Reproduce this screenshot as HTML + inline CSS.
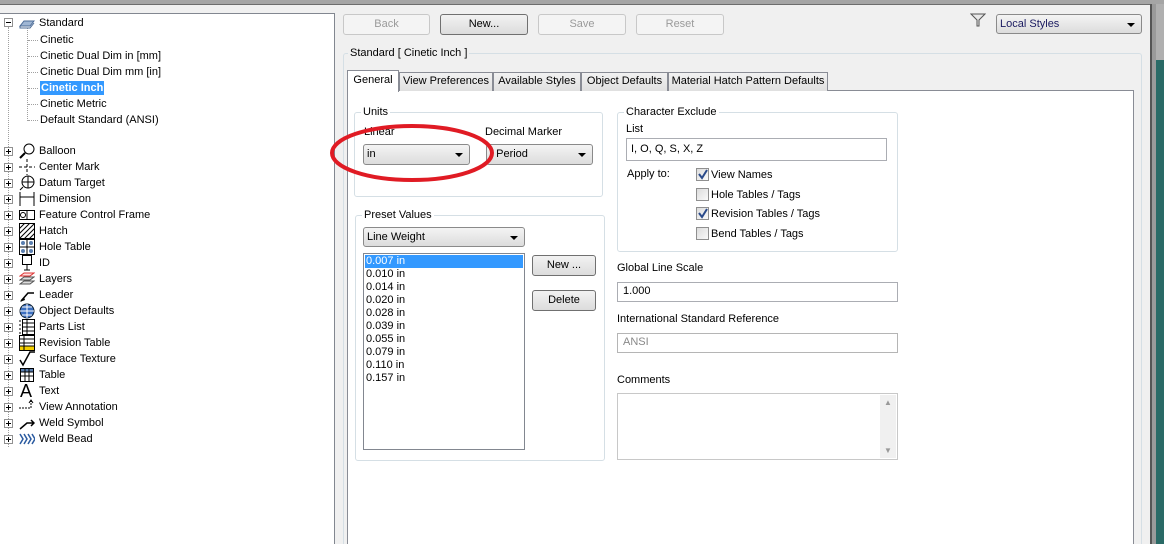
<!DOCTYPE html>
<html style="overflow:hidden"><head><meta charset="utf-8"><style>
*{box-sizing:border-box}
body{margin:0;width:1164px;height:544px;overflow:hidden;background:#f0f0f0;font-family:"Liberation Sans",sans-serif;font-size:11px;color:#000;position:relative}
.a{position:absolute}
.t{position:absolute;white-space:nowrap;line-height:14px}
.btn{position:absolute;border:1px solid #acacac;border-radius:3px;background:linear-gradient(#f2f2f2,#dcdcdc);text-align:center;line-height:18px;color:#000;white-space:nowrap}
.dis{color:#9a9a9a;background:#f4f4f4;border-color:#c8c8c8}
.combo{position:absolute;border:1px solid #8a8a8a;border-radius:3px;background:linear-gradient(#f4f4f4,#dcdcdc);line-height:18px;padding-left:3px;white-space:nowrap}
.combo:after{content:"";position:absolute;right:6px;top:8px;border-left:4px solid transparent;border-right:4px solid transparent;border-top:4px solid #000}
.grp{position:absolute;border:1px solid #d5dfe5;border-radius:3px}
.gl{position:absolute;top:-8px;left:6px;background:#fff;padding:0 2px;line-height:14px;white-space:nowrap}
.inp{position:absolute;border:1px solid #abadb3;background:#fff;line-height:17px;padding-left:5px;white-space:nowrap}
.cb{position:absolute;width:13px;height:13px;border:1px solid #8f8f8f;background:linear-gradient(135deg,#dcdcdc,#fafafa)}
.tab{position:absolute;top:72px;height:19px;border:1px solid #898c95;border-bottom:none;background:linear-gradient(#f2f2f2,#e0e0e0);line-height:17px;text-align:center;white-space:nowrap;overflow:hidden}
.pm{position:absolute;left:4px;width:9px;height:9px;border:1px solid #919191;background:#fff}
.pm:before{content:"";position:absolute;left:1px;top:3px;width:5px;height:1px;background:#000}
.pm.p:after{content:"";position:absolute;left:3px;top:1px;width:1px;height:5px;background:#000}
.ic{position:absolute;left:19px;width:16px;height:16px}
</style></head><body>
<div class="a" style="left:0;top:0;width:1164px;height:4px;background:#a5a5a5"></div>
<div class="a" style="left:0;top:4px;width:1150px;height:1px;background:#6d6d6d"></div>
<div class="a" style="left:1150px;top:4px;width:2px;height:540px;background:#555"></div>
<div class="a" style="left:1152px;top:4px;width:4px;height:540px;background:#9a9a9a"></div>
<div class="a" style="left:1156px;top:60px;width:8px;height:484px;background:#2a6a66"></div>
<div class="a" style="left:1156px;top:4px;width:8px;height:56px;background:#b0b0b0"></div>

<!-- tree -->
<div class="a" style="left:0;top:13px;width:335px;height:531px;background:#fff;border-top:1px solid #828790;border-right:1px solid #828790"></div>
<div class="a" style="left:8px;top:27px;height:420px;border-left:1px dotted #a0a0a0"></div>
<div class="a" style="left:27px;top:28px;height:93px;border-left:1px dotted #a0a0a0"></div>
<div class="pm" style="top:18px"></div>
<svg class="ic" style="top:15px" viewBox="0 0 16 16"><path d="M1 11 L5 6 H15 L11 11 Z" fill="#9fb6d4" stroke="#4a6a96"/><path d="M1 11 V13 H11 L15 8" fill="none" stroke="#4a6a96"/></svg>
<div class="t" style="left:39px;top:16px">Standard</div>
<div class="t" style="left:40px;top:33px">Cinetic</div>
<div class="t" style="left:40px;top:49px">Cinetic Dual Dim in [mm]</div>
<div class="t" style="left:40px;top:65px">Cinetic Dual Dim mm [in]</div>
<div class="t" style="left:40px;top:81px;background:#3399ff;color:#fff;padding:0 1px;font-weight:bold">Cinetic Inch</div>
<div class="t" style="left:40px;top:97px">Cinetic Metric</div>
<div class="t" style="left:40px;top:113px">Default Standard (ANSI)</div>
<div class="a" style="left:28px;top:40px;width:10px;border-top:1px dotted #a0a0a0"></div>
<div class="a" style="left:28px;top:56px;width:10px;border-top:1px dotted #a0a0a0"></div>
<div class="a" style="left:28px;top:72px;width:10px;border-top:1px dotted #a0a0a0"></div>
<div class="a" style="left:28px;top:88px;width:10px;border-top:1px dotted #a0a0a0"></div>
<div class="a" style="left:28px;top:104px;width:10px;border-top:1px dotted #a0a0a0"></div>
<div class="a" style="left:28px;top:120px;width:10px;border-top:1px dotted #a0a0a0"></div>

<div class="pm p" style="top:147px"></div><svg class="ic" style="top:143px" viewBox="0 0 16 16"><circle cx="10" cy="6" r="5" fill="none" stroke="#000"/><path d="M6 10 L1 15" stroke="#000" stroke-width="2"/></svg><div class="t" style="left:39px;top:144px">Balloon</div>
<div class="pm p" style="top:163px"></div><svg class="ic" style="top:159px" viewBox="0 0 16 16"><path d="M0 8H16M8 0V16" stroke="#000" stroke-dasharray="3 2"/></svg><div class="t" style="left:39px;top:160px">Center Mark</div>
<div class="pm p" style="top:179px"></div><svg class="ic" style="top:175px" viewBox="0 0 16 16"><circle cx="9" cy="7" r="6" fill="none" stroke="#000"/><path d="M3 7H15M9 1V13M4 12L1 15" stroke="#000"/></svg><div class="t" style="left:39px;top:176px">Datum Target</div>
<div class="pm p" style="top:195px"></div><svg class="ic" style="top:191px" viewBox="0 0 16 16"><path d="M1 1V15M15 1V15M1 6H15" stroke="#000"/></svg><div class="t" style="left:39px;top:192px">Dimension</div>
<div class="pm p" style="top:211px"></div><svg class="ic" style="top:207px" viewBox="0 0 16 16"><rect x="0.5" y="3.5" width="15" height="9" fill="#fff" stroke="#000"/><path d="M8 3V13" stroke="#000"/><circle cx="4" cy="8" r="2.5" fill="none" stroke="#000"/></svg><div class="t" style="left:39px;top:208px">Feature Control Frame</div>
<div class="pm p" style="top:227px"></div><svg class="ic" style="top:223px" viewBox="0 0 16 16"><rect x="0.5" y="0.5" width="15" height="15" fill="#fff" stroke="#000"/><path d="M0 6L6 0M0 11L11 0M0 16L16 0M5 16L16 5M10 16L16 10" stroke="#000"/></svg><div class="t" style="left:39px;top:224px">Hatch</div>
<div class="pm p" style="top:243px"></div><svg class="ic" style="top:239px" viewBox="0 0 16 16"><rect x="0.5" y="0.5" width="15" height="15" fill="#fff" stroke="#000"/><path d="M8 0V16M0 8H16" stroke="#000"/><circle cx="4" cy="4" r="2" fill="#5a7fb0"/><circle cx="12" cy="4" r="2" fill="#5a7fb0"/><circle cx="4" cy="12" r="2" fill="#5a7fb0"/><circle cx="12" cy="12" r="2" fill="#5a7fb0"/></svg><div class="t" style="left:39px;top:240px">Hole Table</div>
<div class="pm p" style="top:259px"></div><svg class="ic" style="top:255px" viewBox="0 0 16 16"><rect x="3.5" y="0.5" width="9" height="9" fill="#fff" stroke="#000"/><path d="M8 10V15M5 15H11" stroke="#000"/></svg><div class="t" style="left:39px;top:256px">ID</div>
<div class="pm p" style="top:275px"></div><svg class="ic" style="top:271px" viewBox="0 0 16 16"><path d="M1 5L5 2H15L11 5Z" fill="#fdd" stroke="#d33"/><path d="M1 9L5 6H15L11 9ZM1 13L5 10H15L11 13Z" fill="#ddd" stroke="#555"/></svg><div class="t" style="left:39px;top:272px">Layers</div>
<div class="pm p" style="top:291px"></div><svg class="ic" style="top:287px" viewBox="0 0 16 16"><path d="M2 14L9 6H15" stroke="#000" fill="none" stroke-width="1.5"/><path d="M1 15L5 10L6 13Z" fill="#000"/></svg><div class="t" style="left:39px;top:288px">Leader</div>
<div class="pm p" style="top:307px"></div><svg class="ic" style="top:303px" viewBox="0 0 16 16"><circle cx="8" cy="8" r="7" fill="#3b6fc0" stroke="#123"/><path d="M1 8H15M8 1V15M3 4H13M3 12H13" stroke="#fff"/></svg><div class="t" style="left:39px;top:304px">Object Defaults</div>
<div class="pm p" style="top:323px"></div><svg class="ic" style="top:319px" viewBox="0 0 16 16"><rect x="3.5" y="0.5" width="12" height="15" fill="#fff" stroke="#000"/><path d="M3 4H16M3 8H16M3 12H16M8 0V16M0 2H2M0 6H2M0 10H2M0 14H2" stroke="#000"/></svg><div class="t" style="left:39px;top:320px">Parts List</div>
<div class="pm p" style="top:339px"></div><svg class="ic" style="top:335px" viewBox="0 0 16 16"><rect x="0.5" y="0.5" width="15" height="15" fill="#fff" stroke="#000"/><rect x="1" y="11" width="14" height="4" fill="#f5d000"/><path d="M0 4H16M0 8H16M0 11H16M5 0V16" stroke="#000"/></svg><div class="t" style="left:39px;top:336px">Revision Table</div>
<div class="pm p" style="top:355px"></div><svg class="ic" style="top:351px" viewBox="0 0 16 16"><path d="M1 9L4 14L11 1H16" stroke="#000" fill="none" stroke-width="1.5"/></svg><div class="t" style="left:39px;top:352px">Surface Texture</div>
<div class="pm p" style="top:371px"></div><svg class="ic" style="top:367px" viewBox="0 0 16 16"><rect x="1.5" y="1.5" width="13" height="13" fill="#fff" stroke="#000"/><rect x="2" y="2" width="12" height="3" fill="#5a7fb0"/><path d="M1 5H15M1 9H15M6 1V15M10 1V15" stroke="#000"/></svg><div class="t" style="left:39px;top:368px">Table</div>
<div class="pm p" style="top:387px"></div><div class="t" style="left:20px;top:381px;font-size:18px;line-height:20px">A</div><div class="t" style="left:39px;top:384px">Text</div>
<div class="pm p" style="top:403px"></div><svg class="ic" style="top:399px" viewBox="0 0 16 16"><path d="M0 9H12M12 9V2" stroke="#000" stroke-dasharray="2 1"/><path d="M10 4L12 1L14 4" stroke="#000" fill="none"/></svg><div class="t" style="left:39px;top:400px">View Annotation</div>
<div class="pm p" style="top:419px"></div><svg class="ic" style="top:415px" viewBox="0 0 16 16"><path d="M1 14L8 8L15 8M12 5L15 8L12 11" stroke="#000" fill="none" stroke-width="1.5"/></svg><div class="t" style="left:39px;top:416px">Weld Symbol</div>
<div class="pm p" style="top:435px"></div><svg class="ic" style="top:431px" viewBox="0 0 16 16"><path d="M1 3L4 8L1 13M5 3L8 8L5 13M9 3L12 8L9 13M13 3L16 8L13 13" stroke="#2a5aa0" fill="none" stroke-width="1.5"/></svg><div class="t" style="left:39px;top:432px">Weld Bead</div>

<!-- top buttons -->
<div class="btn dis" style="left:343px;top:14px;width:87px;height:21px">Back</div>
<div class="btn" style="left:440px;top:14px;width:88px;height:21px;border-color:#707070">New...</div>
<div class="btn dis" style="left:538px;top:14px;width:88px;height:21px">Save</div>
<div class="btn dis" style="left:636px;top:14px;width:88px;height:21px">Reset</div>
<svg class="a" style="left:970px;top:13px" width="16" height="14" viewBox="0 0 16 14"><path d="M1 1H15L9 7V13H7V7Z" fill="#e8e8e8" stroke="#555"/></svg>
<div class="combo" style="left:996px;top:14px;width:146px;height:20px;color:#1a1a60">Local Styles</div>

<!-- group frame -->
<div class="a" style="left:343px;top:53px;width:799px;height:491px;border:1px solid #d5dfe5;border-bottom:none;border-radius:3px 3px 0 0"></div>
<div class="t" style="left:348px;top:46px;background:#f0f0f0;padding:0 2px">Standard [ Cinetic Inch ]</div>

<!-- tabs -->
<div class="a" style="left:347px;top:90px;width:787px;height:454px;background:#fff;border:1px solid #898c95;border-bottom:none"></div>
<div class="tab" style="left:399px;width:94px">View Preferences</div>
<div class="tab" style="left:493px;width:88px">Available Styles</div>
<div class="tab" style="left:581px;width:87px">Object Defaults</div>
<div class="tab" style="left:668px;width:160px">Material Hatch Pattern Defaults</div>
<div class="tab" style="left:347px;top:70px;height:22px;width:52px;background:#fff;line-height:18px">General</div>

<!-- units -->
<div class="grp" style="left:354px;top:112px;width:249px;height:85px"><div class="gl">Units</div></div>
<div class="t" style="left:364px;top:125px">Linear</div>
<div class="combo" style="left:363px;top:144px;width:107px;height:21px">in</div>
<div class="t" style="left:485px;top:125px">Decimal Marker</div>
<div class="combo" style="left:486px;top:144px;width:107px;height:21px">. Period</div>
<svg class="a" style="left:330px;top:118px" width="170" height="70"><ellipse cx="82" cy="35" rx="80" ry="27" fill="none" stroke="#e01b24" stroke-width="4"/></svg>

<!-- preset -->
<div class="grp" style="left:355px;top:215px;width:250px;height:246px"><div class="gl">Preset Values</div></div>
<div class="combo" style="left:363px;top:227px;width:162px;height:20px">Line Weight</div>
<div class="a" style="left:363px;top:253px;width:162px;height:197px;border:1px solid #828790;background:#fff"></div>
<div class="a" style="left:365px;top:255px;width:158px;height:13px;background:#3399ff"></div>
<div class="t" style="left:366px;top:254px;color:#fff">0.007 in</div>
<div class="t" style="left:366px;top:267px">0.010 in</div>
<div class="t" style="left:366px;top:280px">0.014 in</div>
<div class="t" style="left:366px;top:293px">0.020 in</div>
<div class="t" style="left:366px;top:306px">0.028 in</div>
<div class="t" style="left:366px;top:319px">0.039 in</div>
<div class="t" style="left:366px;top:332px">0.055 in</div>
<div class="t" style="left:366px;top:345px">0.079 in</div>
<div class="t" style="left:366px;top:358px">0.110 in</div>
<div class="t" style="left:366px;top:371px">0.157 in</div>
<div class="btn" style="left:532px;top:255px;width:64px;height:21px;border-color:#707070">New ...</div>
<div class="btn" style="left:532px;top:290px;width:64px;height:21px;border-color:#707070">Delete</div>

<!-- char exclude -->
<div class="grp" style="left:617px;top:112px;width:281px;height:140px"><div class="gl">Character Exclude</div></div>
<div class="t" style="left:626px;top:122px">List</div>
<div class="inp" style="left:626px;top:138px;width:261px;height:23px;line-height:20px;padding-left:4px">I, O, Q, S, X, Z</div>
<div class="t" style="left:627px;top:167px">Apply to:</div>
<div class="cb" style="left:696px;top:168px"><svg width="11" height="11" style="position:absolute;left:0;top:0"><path d="M2 5L5 9L10 1" stroke="#2a4a8a" stroke-width="2" fill="none"/></svg></div><div class="t" style="left:711px;top:168px">View Names</div>
<div class="cb" style="left:696px;top:188px"></div><div class="t" style="left:711px;top:188px">Hole Tables / Tags</div>
<div class="cb" style="left:696px;top:207px"><svg width="11" height="11" style="position:absolute;left:0;top:0"><path d="M2 5L5 9L10 1" stroke="#2a4a8a" stroke-width="2" fill="none"/></svg></div><div class="t" style="left:711px;top:207px">Revision Tables / Tags</div>
<div class="cb" style="left:696px;top:227px"></div><div class="t" style="left:711px;top:227px">Bend Tables / Tags</div>

<div class="t" style="left:617px;top:261px">Global Line Scale</div>
<div class="inp" style="left:617px;top:282px;width:281px;height:20px">1.000</div>
<div class="t" style="left:617px;top:312px">International Standard Reference</div>
<div class="inp" style="left:617px;top:333px;width:281px;height:20px;color:#888;border-color:#b5b5b5">ANSI</div>
<div class="t" style="left:617px;top:373px">Comments</div>
<div class="inp" style="left:617px;top:393px;width:281px;height:67px;border-color:#c8c8c8"></div>
<div class="a" style="left:880px;top:395px;width:16px;height:63px;background:#f0f0f0"></div>
<div class="t" style="left:884px;top:396px;font-size:8px;color:#999">▲</div>
<div class="t" style="left:884px;top:444px;font-size:8px;color:#999">▼</div>
</body></html>
